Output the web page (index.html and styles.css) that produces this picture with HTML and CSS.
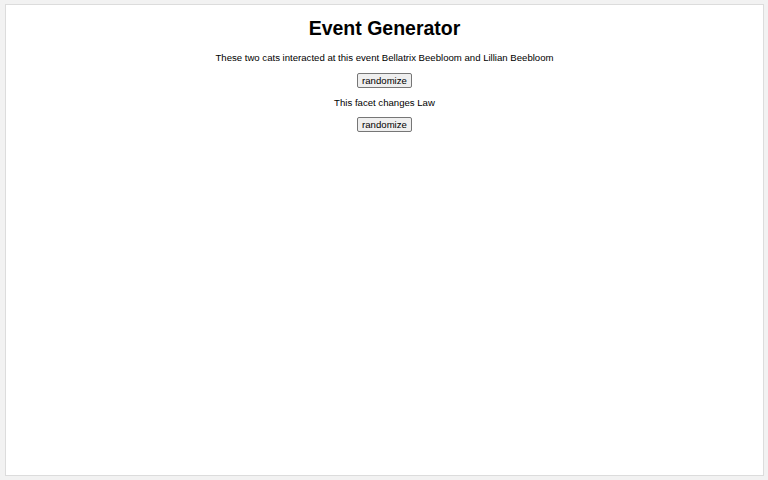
FILE: index.html
```html
<!DOCTYPE html>
<html lang="en">
<head>
    <meta charset="UTF-8">
    <meta name="viewport" content="width=device-width, initial-scale=1.0">
    <title>Event Generator</title>
    <link rel="stylesheet" href="styles.css">
</head>
<body>
    <div class="page">
        <h1>Event Generator</h1>

        <p class="line" id="eventText">These two cats interacted at this event Bellatrix Beebloom and Lillian Beebloom</p>
        <button class="roll" id="eventBtn">randomize</button>

        <p class="line" id="facetText">This facet changes Law</p>
        <button class="roll" id="facetBtn">randomize</button>
    </div>
</body>
</html>
```

FILE: styles.css
```css
html, body {
    height: 100%;
}

body {
    margin: 0;
    padding: 4px 4px 4px 5px;
    box-sizing: border-box;
    background: #f2f2f2;
    font-family: "Liberation Sans", Arial, sans-serif;
    color: #000;
}

.page {
    height: 100%;
    box-sizing: border-box;
    background: #fff;
    border: 1px solid #dcdcdc;
    display: flex;
    flex-direction: column;
    align-items: center;
    padding-top: 12px;
}

h1 {
    font-size: 19.5px;
    font-weight: bold;
    margin: 0 0 12px;
}

.line {
    font-size: 9.6px;
    line-height: 11px;
    margin: 0 0 9.6px;
}

.roll {
    font-family: "Liberation Sans", Arial, sans-serif;
    font-size: 9.6px;
    line-height: 11px;
    padding: 1px 4px;
    background: #efefef;
    border: 1px solid #767676;
    border-radius: 2px;
    margin: 0 0 9px;
}
```
